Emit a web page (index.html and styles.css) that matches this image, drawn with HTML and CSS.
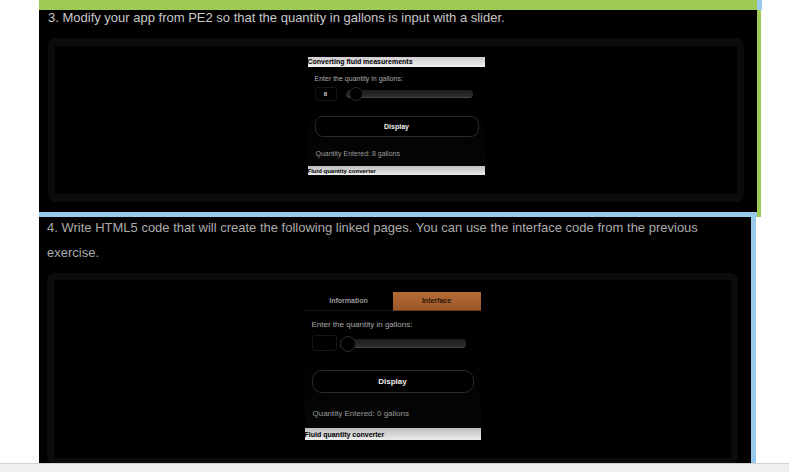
FILE: index.html
```
<!DOCTYPE html>
<html lang="en">
<head>
  <meta charset="UTF-8" />
  <title>Programming exercises</title>
  <link rel="stylesheet" href="styles.css">
</head>
<body>
  <main class="page">
    <div class="top-bar"></div>

    <section class="exercise exercise-slider">
      <div class="exercise-body">
        <p class="task">3. Modify your app from PE2 so that the quantity in gallons is input with a slider.</p>
        <div class="frame">
          <form class="app">
            <div class="app-bar">Converting fluid measurements</div>
            <div class="app-content">
              <label for="gallons1">Enter the quantity in gallons:</label>
              <div class="slider-row">
                <input type="text" class="amount" id="gallons1" value="8" />
                <input type="range" class="slider" aria-label="Gallons" min="0" max="255" value="8" />
              </div>
              <button type="button">Display</button>
              <p class="result">Quantity Entered: 8 gallons</p>
            </div>
            <div class="app-bar app-footer">Fluid quantity converter</div>
          </form>
        </div>
      </div>
    </section>

    <section class="exercise exercise-pages">
      <p class="task">4. Write HTML5 code that will create the following linked pages. You can use the interface code from the previous exercise.</p>
      <div class="frame">
        <form class="app app-large">
          <nav class="tabs">
            <a href="#information">Information</a>
            <a href="#interface" class="active">Interface</a>
          </nav>
          <div class="app-content">
            <label for="gallons2">Enter the quantity in gallons:</label>
            <div class="slider-row">
              <input type="text" class="amount" id="gallons2" value="" />
              <input type="range" class="slider" aria-label="Gallons" min="0" max="255" value="0" />
            </div>
            <button type="button">Display</button>
            <p class="result">Quantity Entered: 0 gallons</p>
          </div>
          <div class="app-bar app-footer">Fluid quantity converter</div>
        </form>
      </div>
    </section>
  </main>
  <div class="status-bar"></div>
</body>
</html>
```

FILE: styles.css
```
* {
  box-sizing: border-box;
}
body {
  font-family: "Liberation Sans", Arial, sans-serif;
  background-color: #fff;
  margin: 0;
  height: 100vh;
  display: flex;
  flex-direction: column;
  overflow: hidden;
}
p {
  margin: 0;
}
.page {
  flex: 1;
  min-height: 0;
  overflow: hidden;
  margin: 0 27px 0 39px;
}
.top-bar {
  height: 10px;
  background-color: #9dcb54;
  border-right: 5px solid #99caee;
}
.exercise {
  display: flow-root;
  background-color: #000;
  color: #c8c8c8;
}
.exercise-slider {
  margin-right: 1px;
  border-right: 4px solid #9dcb54;
}
.exercise-slider .exercise-body {
  padding: 0 13px 10px 9px;
  border-bottom: 5px solid #99caee;
}
.exercise-pages {
  margin-right: 6px;
  padding: 0 13px 10px 8px;
  border-right: 5px solid #99caee;
  color: #ababab;
}
.task {
  font-size: 13px;
  line-height: 16px;
  padding-bottom: 12px;
}
.exercise-pages .task {
  line-height: 25px;
  padding-bottom: 8px;
  margin-top: -2px;
}
.frame {
  border: 7px solid #0c0c0c;
  border-width: 8px 7px;
  border-radius: 8px;
  padding: 11px 0 19px;
}
.exercise-pages .frame {
  border-width: 7px;
  padding: 12px 0 18px;
}

/* phone app */
.app {
  width: 177px;
  margin: 0 auto;
  font-size: 7px;
  background: linear-gradient(#000 40%, #070707);
}
.app-bar {
  height: 10px;
  line-height: 10px;
  font-weight: bold;
  color: #000;
  background: linear-gradient(#cfcbce, #f2f2f2);
}
.app-footer {
  height: 9px;
  line-height: 10px;
  font-size: 6px;
  background: linear-gradient(#bdbdbd, #ebebeb);
}
.app-content {
  padding: 8px 6px 8px 7px;
}
.app label {
  display: block;
  line-height: 8px;
  color: #aaa;
}
.slider-row {
  display: flex;
  align-items: center;
  gap: 9px;
  margin-top: 4px;
  padding-right: 6px;
}
.amount {
  width: 22px;
  height: 14px;
  padding: 0;
  font: bold 6px "Liberation Sans", Arial, sans-serif;
  text-align: center;
  color: #ccc;
  background-color: #000;
  border: 1px solid #161616;
  border-radius: 3px;
}
.slider {
  appearance: none;
  flex: 1;
  min-width: 0;
  height: 14px;
  margin: 0;
  background: none;
}
.slider::-webkit-slider-runnable-track {
  height: 8px;
  border-radius: 4px;
  border-bottom: 1px solid #444;
  background: linear-gradient(#1c1c1c, #2e2e2e);
}
.slider::-webkit-slider-thumb {
  appearance: none;
  width: 14px;
  height: 14px;
  margin-top: -3px;
  border: 1px solid #2c2c2c;
  border-radius: 50%;
  background-color: #000;
}
.app button {
  display: block;
  width: 100%;
  height: 21px;
  margin-top: 15px;
  padding: 0;
  font: bold 7px "Liberation Sans", Arial, sans-serif;
  color: #eee;
  background-color: #000;
  border: 1px solid #2a2a2a;
  border-radius: 8px;
}
.result {
  margin-top: 13px;
  padding-left: 1px;
  line-height: 8px;
  color: #9a9a9a;
}

/* bigger version with tabs */
.app-large {
  width: 176px;
  font-size: 8px;
}
.tabs {
  display: flex;
  height: 19px;
}
.tabs a {
  flex: 1;
  line-height: 17px;
  font-size: 7px;
  font-weight: bold;
  text-align: center;
  text-decoration: none;
  color: #999;
  border-bottom: 1px solid #151515;
}
.tabs .active {
  color: #2a1608;
  background: linear-gradient(#b56c38, #9c5829);
  border-bottom-color: #6e3c1a;
}
.app-large label,
.app-large .result {
  line-height: 10px;
}
.app-large .slider-row {
  gap: 3px;
  margin-top: 5px;
  padding-right: 8px;
}
.app-large .amount {
  width: 25px;
  height: 16px;
}
.app-large .slider {
  height: 16px;
}
.app-large .slider::-webkit-slider-runnable-track {
  height: 9px;
}
.app-large .slider::-webkit-slider-thumb {
  width: 16px;
  height: 16px;
}
.app-large button {
  height: 23px;
  margin-top: 19px;
  font-size: 8px;
  border-radius: 10px;
}
.app-large .result {
  margin-top: 16px;
}
.app-large .app-content {
  padding: 9px 7px 9px 7px;
}
.app-large .app-footer {
  height: 12px;
  line-height: 14px;
  font-size: 7px;
}

.status-bar {
  height: 9px;
  background-color: #efefef;
  border-top: 1px solid #d2d2d2;
}
```
